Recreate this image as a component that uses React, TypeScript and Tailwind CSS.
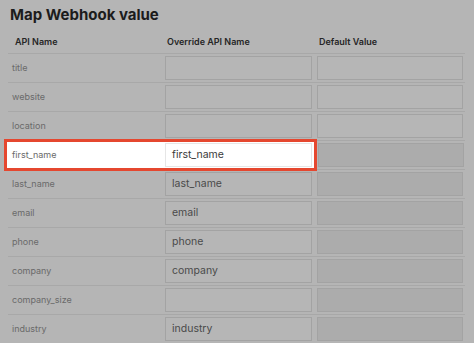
const rows = [
  { name: 'title', value: '', locked: false },
  { name: 'website', value: '', locked: false },
  { name: 'location', value: '', locked: false },
  { name: 'first_name', value: 'first_name', locked: true, active: true },
  { name: 'last_name', value: 'last_name', locked: true },
  { name: 'email', value: 'email', locked: true },
  { name: 'phone', value: 'phone', locked: true },
  { name: 'company', value: 'company', locked: true },
  { name: 'company_size', value: '', locked: true },
  { name: 'industry', value: 'industry', locked: true },
];

function Field({ value, locked }: { value: string; locked?: boolean }) {
  return (
    <div
      className={`h-[24px] flex items-center px-[6px] border border-[#a3a3a3] text-[10.5px] text-[#4a4a4a] ${
        locked ? 'bg-[#acacac]' : 'bg-[#b6b6b6]'
      }`}
    >
      {value}
    </div>
  );
}

export default function App() {
  return (
    <div
      className="w-[474px] h-[343px] overflow-hidden bg-[#b5b5b5] pl-[8px]"
      style={{ fontFamily: 'Inter, "Noto Sans", sans-serif' }}
    >
      <h1 className="pt-[5px] pl-[2px] text-[15px] font-bold text-[#1c1c1c] leading-[20px]">
        Map Webhook value
      </h1>

      <div className="w-[457px] mt-[6px]">
        <div className="flex items-center h-[23px] border-b border-[#a8a8a8] text-[9px] font-semibold text-[#262626]">
          <div className="w-[157px] pl-[7px]">API Name</div>
          <div className="w-[152px] pl-[2px]">Override API Name</div>
          <div className="pl-[2px]">Default Value</div>
        </div>

        {rows.map(row => (
          <div
            key={row.name}
            className="flex items-center h-[29px] border-b border-[#a8a8a8]"
          >
            {row.active ? (
              <div className="flex items-center -ml-[4px] w-[313px] h-[32px] border-[3px] border-[#e5472f] bg-white">
                <div className="w-[158px] pl-[5px] text-[9px] text-[#6a6a6a]">
                  {row.name}
                </div>
                <div className="w-[147px] h-[24px] flex items-center px-[6px] border border-[#e6e6e6] text-[10.5px] text-[#3a3a3a]">
                  {row.value}
                </div>
              </div>
            ) : (
              <>
                <div className="w-[157px] pl-[4px] text-[9px] text-[#6a6a6a]">
                  {row.name}
                </div>
                <div className="w-[147px]">
                  <Field value={row.value} />
                </div>
              </>
            )}
            <div className={`w-[146px] ${row.active ? 'ml-[1px]' : 'ml-[5px]'}`}>
              <Field value="" locked={row.locked} />
            </div>
          </div>
        ))}
      </div>
    </div>
  );
}
